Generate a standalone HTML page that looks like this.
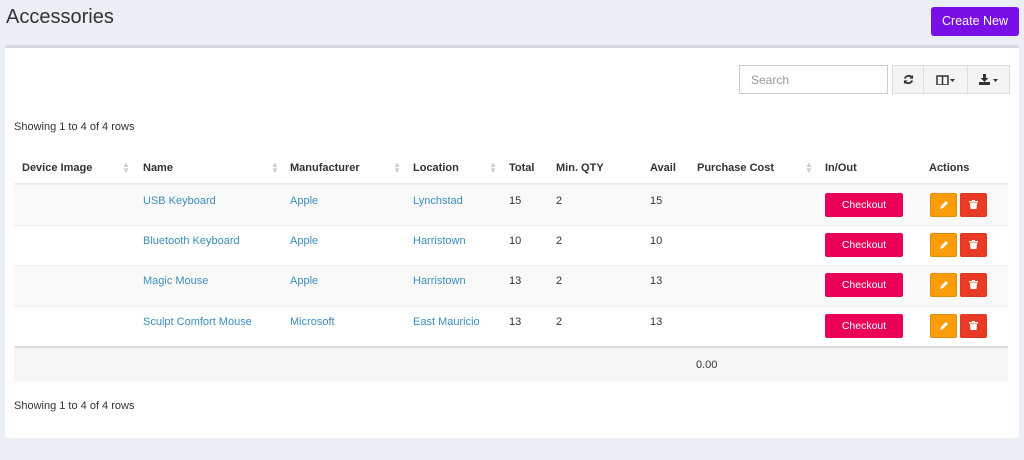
<!DOCTYPE html>
<html><head><style>
*{box-sizing:border-box;margin:0;padding:0}
body{width:1024px;height:460px;background:#eaeef5;font-family:"Liberation Sans",sans-serif;font-size:11px;color:#333;position:relative;overflow:hidden}
.a{position:absolute}
h1{position:absolute;left:6px;top:6px;font-size:20px;font-weight:normal;color:#333}
.cn{left:931px;top:7px;width:88px;height:29px;background:#7a0ee6;color:#fff;border-radius:3px;font-size:12.5px;text-align:center;line-height:29px}
.box{left:5px;top:45px;width:1014px;height:393px;background:#fff;border-top:3px solid #d2d6de;border-radius:3px}
.search{left:739px;top:65px;width:149px;height:29px;border:1px solid #ccc;color:#999;font-size:12px;padding:7px 11px}
.tb{top:65px;height:29px;background:#f4f4f4;border:1px solid #ddd}
.row{left:14px;width:994px}
th,.h{font-weight:bold;font-size:11px}
.lnk{color:#3c8dbc}
.co{width:78px;height:24px;background:#eb0058;color:#fff;border-radius:2px;text-align:center;line-height:24px;font-size:10.5px}
.ed{width:27px;height:24px;background:#fb9c0a;border-radius:2px;border:1px solid #e08e0b}
.dl{width:27px;height:24px;background:#e83a25;border-radius:2px;border:1px solid #d73925}
.sort{color:#ccc;font-size:8px;line-height:6px}
</style></head><body>
<h1>Accessories</h1>
<div class="a cn">Create New</div>
<div class="a box"></div>
<div class="a search">Search</div>
<div class="a tb" style="left:892px;width:32px"><svg class="a" style="left:10px;top:8px" width="11" height="11" viewBox="0 0 12 12"><path d="M10 4A4.5 4.5 0 0 0 2 5M2 8a4.5 4.5 0 0 0 8-1" stroke="#333" stroke-width="2" fill="none"/><path d="M11 1v4H7zM1 11V7h4z" fill="#333"/></svg></div>
<div class="a tb" style="left:923px;width:45px"><svg class="a" style="left:12px;top:9px" width="20" height="10"><rect x="1" y="1" width="11" height="9" fill="none" stroke="#333" stroke-width="1.5"/><line x1="6.5" y1="1" x2="6.5" y2="10" stroke="#333" stroke-width="1.5"/><path d="M14 4h5l-2.5 3z" fill="#333"/></svg></div>
<div class="a tb" style="left:967px;width:43px"><svg class="a" style="left:11px;top:8px" width="22" height="12"><path d="M4 0h3v4h2.5L5.5 8 1.5 4H4z" fill="#333"/><rect x="0" y="8" width="11" height="3" fill="#333"/><path d="M14 5h5l-2.5 3z" fill="#333"/></svg></div>
<div class="a" style="left:14px;top:121px">Showing 1 to 4 of 4 rows</div>
<div class="a" style="left:14px;top:400px">Showing 1 to 4 of 4 rows</div>

<div class="a row" style="top:183px;height:2px;background:#eee"></div>
<div class="a row" style="top:185px;height:40px;background:#f9f9f9"></div>
<div class="a row" style="top:225px;height:1px;background:#eee"></div>
<div class="a row" style="top:265px;height:1px;background:#eee"></div>
<div class="a row" style="top:266px;height:40px;background:#f9f9f9"></div>
<div class="a row" style="top:306px;height:1px;background:#eee"></div>
<div class="a row" style="top:346px;height:2px;background:#ddd"></div>
<div class="a row" style="top:348px;height:34px;background:#f6f6f6"></div>
<div class="a" style="left:696px;top:359px">0.00</div>

<div class="a h" style="left:22px;top:162px">Device Image</div>
<div class="a h" style="left:143px;top:162px">Name</div>
<div class="a h" style="left:290px;top:162px">Manufacturer</div>
<div class="a h" style="left:413px;top:162px">Location</div>
<div class="a h" style="left:509px;top:162px">Total</div>
<div class="a h" style="left:556px;top:162px">Min. QTY</div>
<div class="a h" style="left:650px;top:162px">Avail</div>
<div class="a h" style="left:697px;top:162px">Purchase Cost</div>
<div class="a h" style="left:825px;top:162px">In/Out</div>
<div class="a h" style="left:929px;top:162px">Actions</div>
<div class="a sort" style="left:122px;top:162px">▲<br>▼</div>
<div class="a sort" style="left:271px;top:162px">▲<br>▼</div>
<div class="a sort" style="left:393px;top:162px">▲<br>▼</div>
<div class="a sort" style="left:489px;top:162px">▲<br>▼</div>
<div class="a sort" style="left:805px;top:162px">▲<br>▼</div>

<div class="a lnk" style="left:143px;top:195px">USB Keyboard</div><div class="a lnk" style="left:290px;top:195px">Apple</div><div class="a lnk" style="left:413px;top:195px">Lynchstad</div><div class="a" style="left:509px;top:195px">15</div><div class="a" style="left:556px;top:195px">2</div><div class="a" style="left:650px;top:195px">15</div>
<div class="a lnk" style="left:143px;top:235px">Bluetooth Keyboard</div><div class="a lnk" style="left:290px;top:235px">Apple</div><div class="a lnk" style="left:413px;top:235px">Harristown</div><div class="a" style="left:509px;top:235px">10</div><div class="a" style="left:556px;top:235px">2</div><div class="a" style="left:650px;top:235px">10</div>
<div class="a lnk" style="left:143px;top:275px">Magic Mouse</div><div class="a lnk" style="left:290px;top:275px">Apple</div><div class="a lnk" style="left:413px;top:275px">Harristown</div><div class="a" style="left:509px;top:275px">13</div><div class="a" style="left:556px;top:275px">2</div><div class="a" style="left:650px;top:275px">13</div>
<div class="a lnk" style="left:143px;top:316px">Sculpt Comfort Mouse</div><div class="a lnk" style="left:290px;top:316px">Microsoft</div><div class="a lnk" style="left:413px;top:316px">East Mauricio</div><div class="a" style="left:509px;top:316px">13</div><div class="a" style="left:556px;top:316px">2</div><div class="a" style="left:650px;top:316px">13</div>

<div class="a co" style="left:825px;top:193px">Checkout</div>
<div class="a co" style="left:825px;top:233px">Checkout</div>
<div class="a co" style="left:825px;top:273px">Checkout</div>
<div class="a co" style="left:825px;top:314px">Checkout</div>

<div class="a ed" style="left:930px;top:193px"><svg width="25" height="22"><path d="M9 15l1-3 5-5 2 2-5 5z" fill="#fff"/></svg></div>
<div class="a dl" style="left:960px;top:193px"><svg width="25" height="22"><path d="M8 7h9v1.5H8zM11 6h3v1h-3zM9 9h7l-.5 6h-6z" fill="#fff"/></svg></div>
<div class="a ed" style="left:930px;top:233px"><svg width="25" height="22"><path d="M9 15l1-3 5-5 2 2-5 5z" fill="#fff"/></svg></div>
<div class="a dl" style="left:960px;top:233px"><svg width="25" height="22"><path d="M8 7h9v1.5H8zM11 6h3v1h-3zM9 9h7l-.5 6h-6z" fill="#fff"/></svg></div>
<div class="a ed" style="left:930px;top:273px"><svg width="25" height="22"><path d="M9 15l1-3 5-5 2 2-5 5z" fill="#fff"/></svg></div>
<div class="a dl" style="left:960px;top:273px"><svg width="25" height="22"><path d="M8 7h9v1.5H8zM11 6h3v1h-3zM9 9h7l-.5 6h-6z" fill="#fff"/></svg></div>
<div class="a ed" style="left:930px;top:314px"><svg width="25" height="22"><path d="M9 15l1-3 5-5 2 2-5 5z" fill="#fff"/></svg></div>
<div class="a dl" style="left:960px;top:314px"><svg width="25" height="22"><path d="M8 7h9v1.5H8zM11 6h3v1h-3zM9 9h7l-.5 6h-6z" fill="#fff"/></svg></div>
</body></html>
